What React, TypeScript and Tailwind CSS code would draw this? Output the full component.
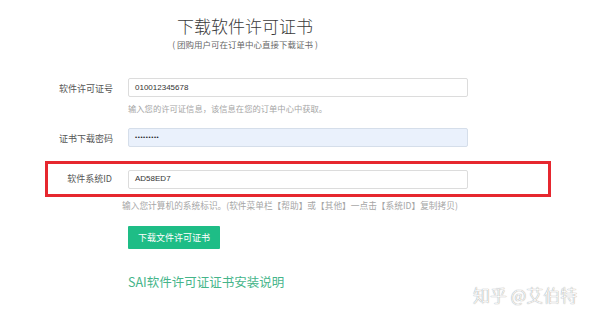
import React from "react";

const cjk = '"Noto Sans CJK SC", "Noto Sans", sans-serif';

function Row({ label, children }: { label: string; children: React.ReactNode }) {
  return (
    <div className="flex items-center h-[19px]">
      <div className="w-[113px] text-right text-[9px] leading-[12px] text-[#555] pt-[2px]">{label}</div>
      <div className="ml-[15px] w-[340px] h-[19px]">{children}</div>
    </div>
  );
}

export default function App() {
  return (
    <div
      className="relative w-[600px] h-[320px] overflow-hidden bg-white"
      style={{ fontFamily: cjk }}
    >
      <div className="pt-[16px] w-[490px] text-center">
        <div className="text-[17px] leading-[20px] text-[#3a3a3a] font-light">下载软件许可证书</div>
        <div className="mt-[3px] text-[8.5px] leading-[10px] text-[#666] whitespace-nowrap">( 团购用户可在订单中心直接下载证书 )</div>
      </div>

      <div className="mt-[29px]">
        <Row label="软件许可证号">
          <div className="h-full border border-[#dcdcdc] rounded-[2px] bg-white flex items-center pl-[6px] text-[8px] text-[#333]" style={{ fontFamily: '"Liberation Sans", Arial, sans-serif' }}>
            010012345678
          </div>
        </Row>
      </div>
      <div className="mt-[6px] ml-[128px] text-[8.3px] leading-[10px] text-[#a6a6a6] whitespace-nowrap">
        输入您的许可证信息，该信息在您的订单中心中获取。
      </div>

      <div className="mt-[15px]">
        <Row label="证书下载密码">
          <div className="h-full border border-[#d5deea] rounded-[2px] bg-[#eaf1fc] flex items-center pl-[6px] text-[6px] tracking-[0.6px] text-[#222]" style={{ fontFamily: '"Liberation Sans", Arial, sans-serif' }}>
            •••••••••
          </div>
        </Row>
      </div>

      <div className="mt-[14px] ml-[45px] w-[506px] h-[36px] border-[3px] border-[#e6272f] flex items-center">
        <div className="flex items-center h-[19px]">
          <div className="w-[64px] text-right text-[9px] leading-[12px] text-[#555]">软件系统ID</div>
          <div className="ml-[16px] w-[340px] h-[19px] border border-[#dcdcdc] rounded-[2px] bg-white flex items-center pl-[6px] text-[8px] text-[#333]" style={{ fontFamily: '"Liberation Sans", Arial, sans-serif' }}>
            AD58ED7
          </div>
        </div>
      </div>
      <div className="mt-[4px] ml-[122px] text-[8.7px] leading-[10px] text-[#a6a6a6] whitespace-nowrap">
        输入您计算机的系统标识。(软件菜单栏【帮助】或【其他】一点击【系统ID】复制拷贝)
      </div>

      <div className="mt-[15px] ml-[128px] w-[92px] h-[23px] bg-[#1ebd86] rounded-[1px] flex items-center justify-center text-white text-[9px]">
        下载文件许可证书
      </div>

      <div className="mt-[25px] ml-[128px] text-[12.5px] leading-[16px] text-[#45b58a] whitespace-nowrap">
        SAI软件许可证证书安装说明
      </div>

      <div className="absolute left-[473px] top-[285px] text-[17px] leading-[20px] text-white font-light whitespace-nowrap [text-shadow:0_0_1px_#a0a0a0,0_0_1px_#a0a0a0]">
        知乎 @艾伯特
      </div>
    </div>
  );
}
